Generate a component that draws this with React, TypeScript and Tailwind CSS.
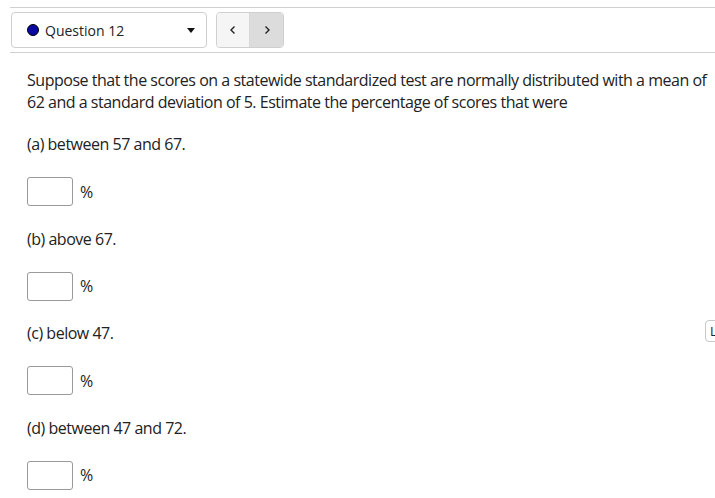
import { useState } from 'react';

const parts = [
  { key: 'a', label: '(a) between 57 and 67.' },
  { key: 'b', label: '(b) above 67.' },
  { key: 'c', label: '(c) below 47.' },
  { key: 'd', label: '(d) between 47 and 72.' },
];

export default function App() {
  const [answers, setAnswers] = useState<Record<string, string>>({});

  return (
    <div className="relative w-full h-[498px] overflow-hidden bg-white text-[#222] font-['Open_Sans',sans-serif]">
      <div className="ml-[10px] mt-[7px] border-t border-b border-[#d0d0d0] pt-[4px] pb-[4px] flex items-center gap-[9px] pl-[1px]">
        <button className="w-[196px] h-[36px] rounded-[4px] border border-[#cfcfcf] bg-white flex items-center pl-[15px] pr-[10px]">
          <span className="w-[12px] h-[12px] rounded-full bg-[#0a0aa0] border border-black" />
          <span className="ml-[6px] text-[14px] text-[#222]">Question 12</span>
          <span className="ml-auto mr-[1px] w-0 h-0 border-l-[4px] border-r-[4px] border-t-[5px] border-l-transparent border-r-transparent border-t-[#111]" />
        </button>
        <div className="flex h-[36px] rounded-[4px] border border-[#cfcfcf] overflow-hidden">
          <button className="w-[33px] h-full bg-[#f5f5f5] flex items-center justify-center border-r border-[#d8d8d8]">
            <svg width="8" height="10" viewBox="0 0 8 10">
              <path d="M5.5 1.5 L2 5 L5.5 8.5" fill="none" stroke="#222" strokeWidth="1.4" />
            </svg>
          </button>
          <button className="w-[33px] h-full bg-[#dcdcdc] flex items-center justify-center">
            <svg width="8" height="10" viewBox="0 0 8 10">
              <path d="M2.5 1.5 L6 5 L2.5 8.5" fill="none" stroke="#222" strokeWidth="1.4" />
            </svg>
          </button>
        </div>
      </div>

      <div className="pl-[27px] pr-[3px] pt-[16px] text-[16px] leading-[22px] text-[#222] tracking-[-0.03em]">
        <p>
          Suppose that the scores on a statewide standardized test are normally distributed with a mean of 62 and a
          standard deviation of 5. Estimate the percentage of scores that were
        </p>

        {parts.map((p, i) => (
          <div key={p.key} className={i === 0 ? 'mt-[20px]' : 'mt-[21.6px]'}>
            <p>{p.label}</p>
            <div className="mt-[22px] flex items-center gap-[7px]">
              <input
                value={answers[p.key] || ''}
                onChange={(e) => setAnswers({ ...answers, [p.key]: e.target.value })}
                className="w-[46px] h-[29px] rounded-[3px] border border-[#999] bg-white px-1 outline-none"
              />
              <span>%</span>
            </div>
          </div>
        ))}
      </div>

      <div className="absolute left-[705px] top-[320px] w-[20px] h-[22px] rounded-[4px] border border-[#c8c8c8] bg-white pl-[4px] text-[13px] leading-[20px] text-[#222]">
        L
      </div>
    </div>
  );
}
